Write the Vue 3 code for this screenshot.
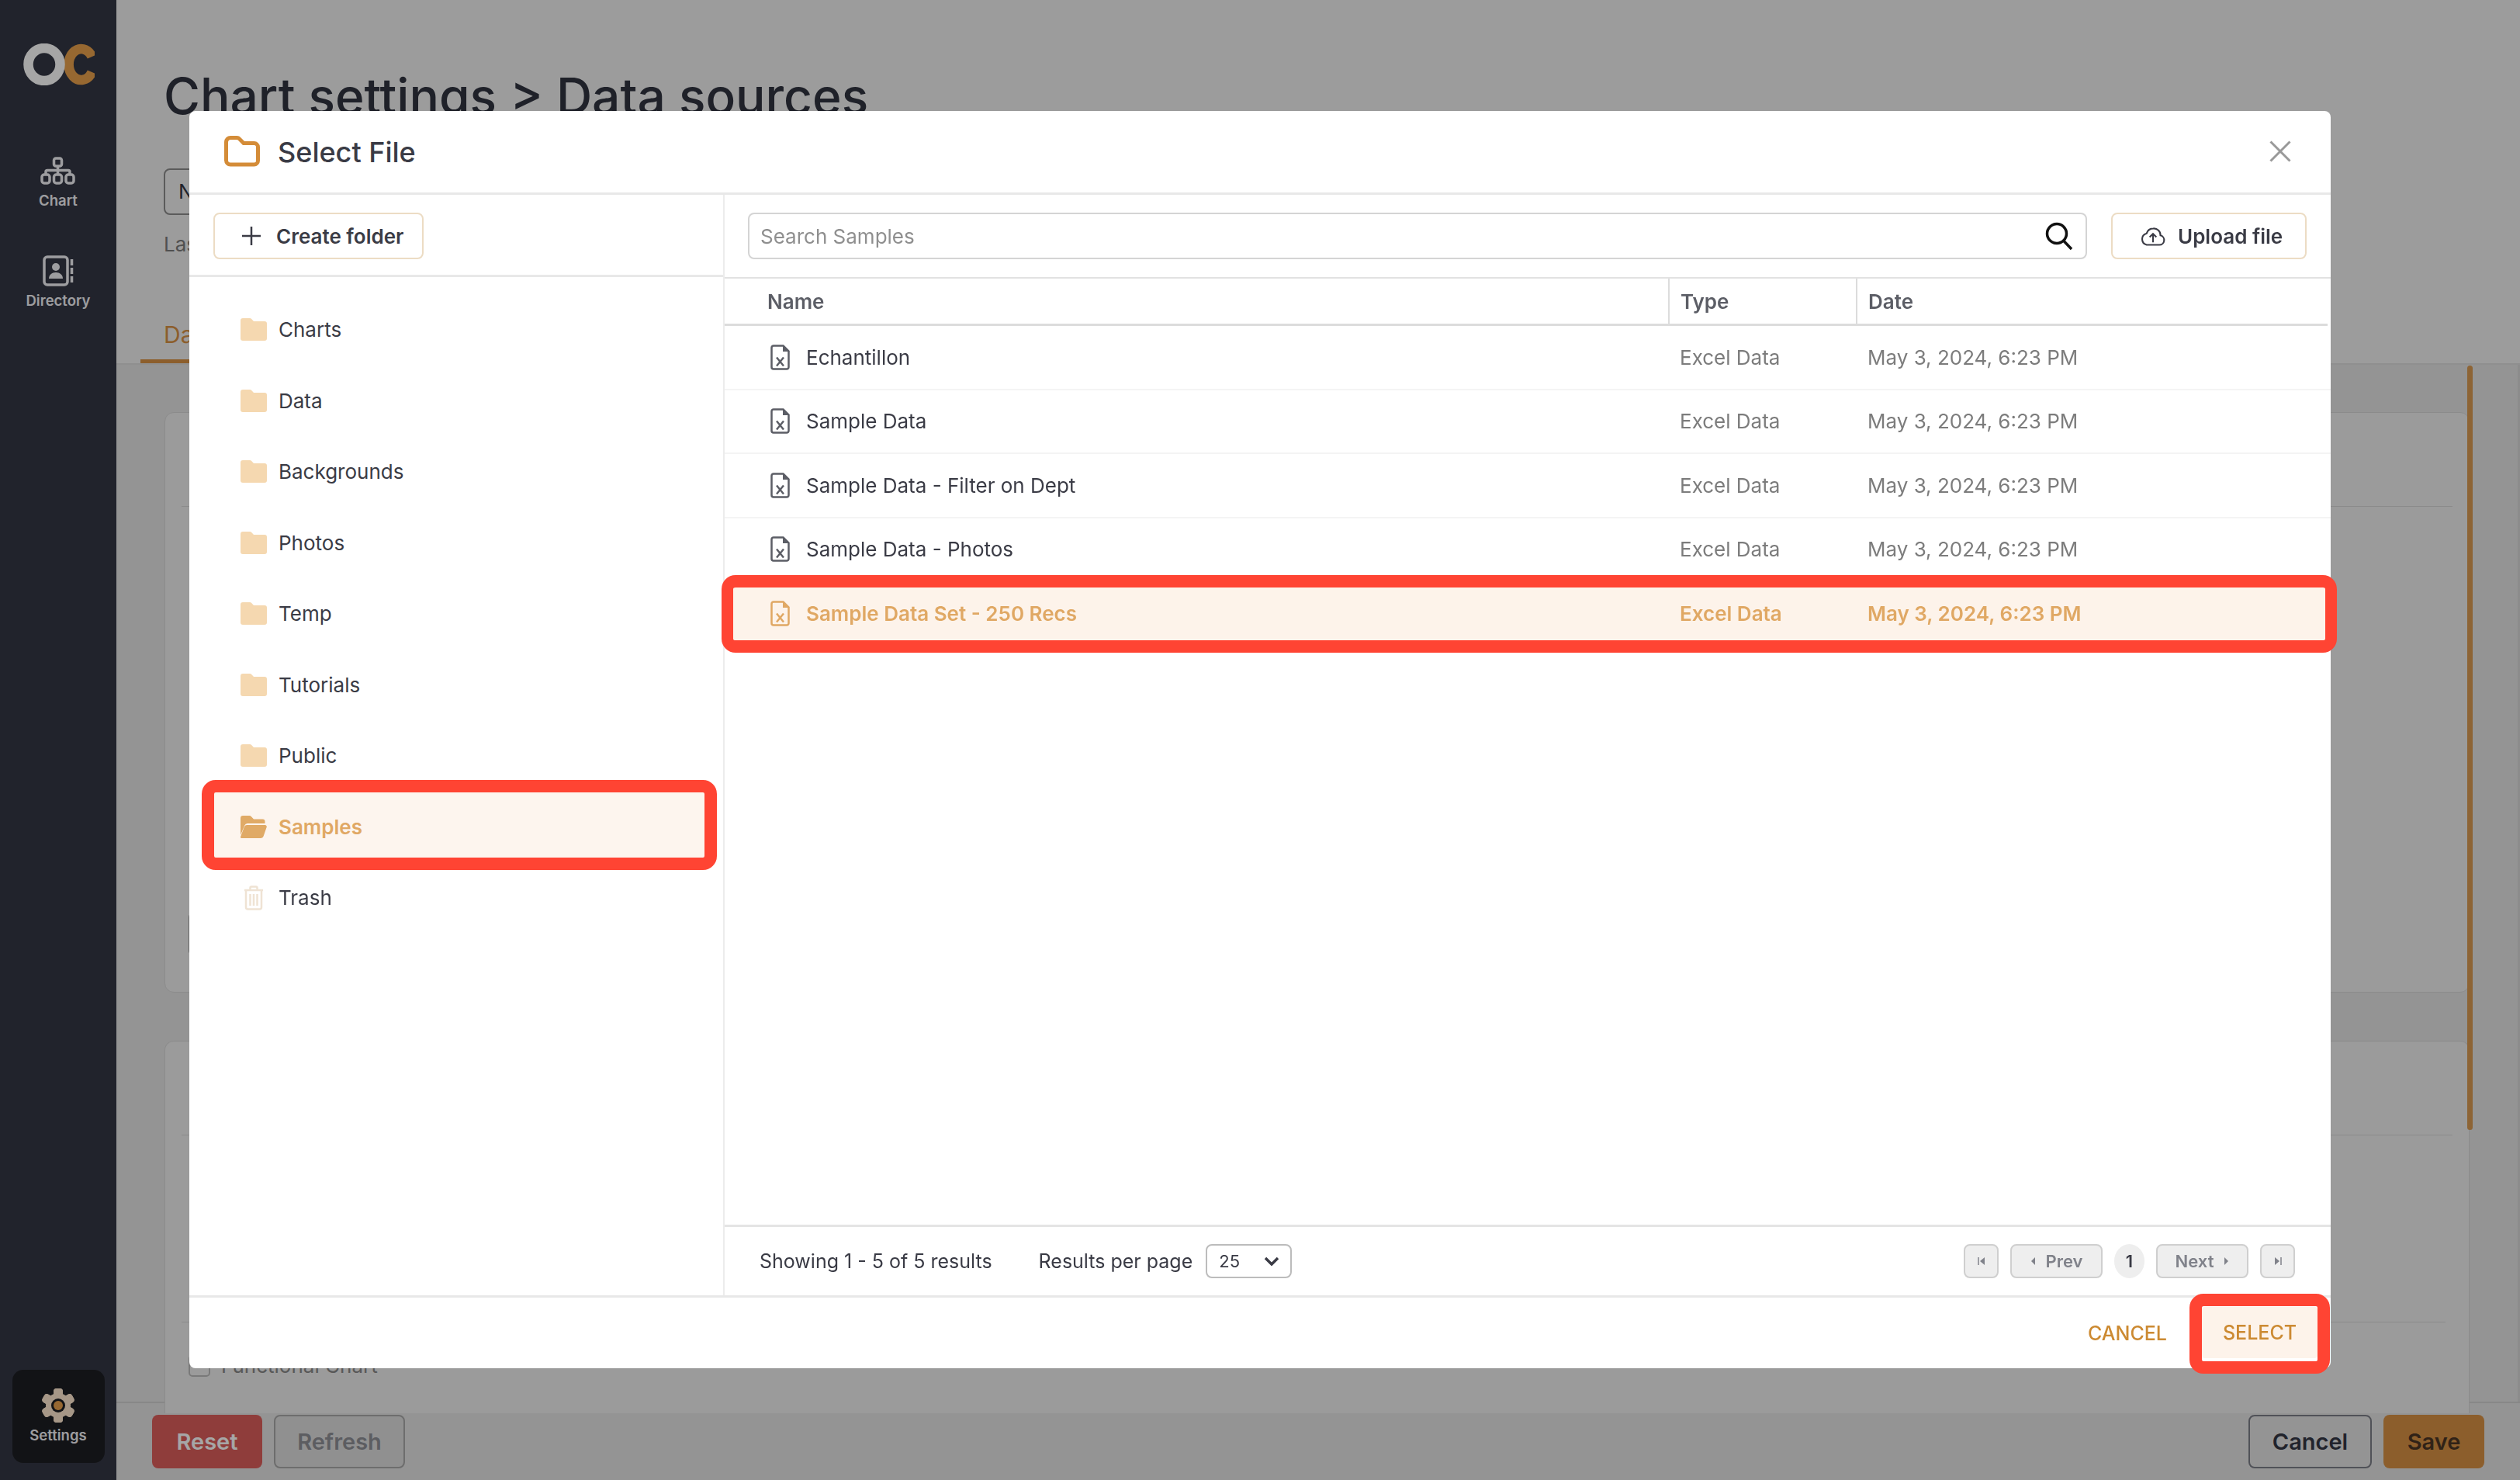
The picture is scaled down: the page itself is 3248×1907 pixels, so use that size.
<script setup>
const folders = [
  { name: 'Charts' }, { name: 'Data' }, { name: 'Backgrounds' }, { name: 'Photos' },
  { name: 'Temp' }, { name: 'Tutorials' }, { name: 'Public' },
  { name: 'Samples', open: true }, { name: 'Trash', trash: true },
]
const files = [
  { name: 'Echantillon' }, { name: 'Sample Data' }, { name: 'Sample Data - Filter on Dept' },
  { name: 'Sample Data - Photos' }, { name: 'Sample Data Set - 250 Recs', active: true },
]
const teeth = [0, 60, 120, 180, 240, 300]
</script>

<template>
  <div class="app">
    <aside class="side">
      <svg class="logo" viewBox="0 0 92 54" width="92" height="54">
        <path class="logo-c" d="M88.5 17 A16 20 0 1 0 88.5 37" />
        <ellipse class="logo-o" cx="27" cy="27" rx="20.5" ry="21" />
      </svg>
      <div class="nav nav-chart">
        <svg viewBox="0 0 45 36" width="45" height="36" class="nav-ic">
          <rect x="17.5" y="2" width="10" height="10" rx="2.5" />
          <path d="M22.5 12v11M7 23v-3.500a2 2 0 0 1 2-2h27a2 2 0 0 1 2 2V23" />
          <rect x="2" y="23" width="10" height="11" rx="3" />
          <rect x="17.500" y="23" width="10" height="11" rx="3" />
          <rect x="33" y="23" width="10" height="11" rx="3" />
        </svg>
        <span>Chart</span>
      </div>
      <div class="nav nav-dir">
        <svg viewBox="0 0 40 40" width="40" height="40" class="nav-ic">
          <rect x="2" y="2" width="30" height="36" rx="4" />
          <circle class="solid" cx="17" cy="15" r="5" />
          <path class="solid" d="M8 30c0-5 4-8 9-8s9 3 9 8z" />
          <path d="M37.500 5v8M37.500 16v8M37.500 27v8" />
        </svg>
        <span>Directory</span>
      </div>
      <div class="nav nav-set">
        <svg viewBox="0 0 44 46" width="44" height="46">
          <g class="gear">
            <rect v-for="a in teeth" :key="a" x="16" y="1" width="12" height="44" rx="4" :transform="`rotate(${a} 22 23)`" />
            <circle cx="22" cy="23" r="16" />
          </g>
          <circle class="gear-ring" cx="22" cy="23" r="9" />
          <circle class="gear-dot" cx="22" cy="23" r="6" />
        </svg>
        <span>Settings</span>
      </div>
    </aside>

    <main class="main">
      <header class="top">
        <h1>Chart settings &gt; Data sources</h1>
        <div class="name-input">Name</div>
        <p class="updated">Last updated</p>
        <div class="tabs"><span class="tab">Data sources</span></div>
      </header>
      <section class="content">
        <div class="card card-a">
          <div class="card-head"></div>
          <div class="ghost-input"></div>
        </div>
        <div class="card card-b">
          <div class="card-head"></div>
          <div class="card-split"></div>
          <label class="check"><i></i>Functional Chart</label>
        </div>
        <div class="thumb"></div>
      </section>
      <footer class="bar">
        <button class="btn reset">Reset</button>
        <button class="btn refresh">Refresh</button>
        <span class="grow"></span>
        <button class="btn cancel">Cancel</button>
        <button class="btn save">Save</button>
      </footer>
    </main>

    <div class="overlay">
      <div class="modal">
        <header class="m-head">
          <svg viewBox="0 0 46 40" width="46" height="40" class="m-folder">
            <path d="M2.500 8a5.500 5.500 0 0 1 5.500-5.500h8.500a4 4 0 0 1 3 1.400L25 9.500h13.500a5 5 0 0 1 5 5V32a5 5 0 0 1-5 5H8a5.500 5.500 0 0 1-5.500-5.500z" />
          </svg>
          <h2>Select File</h2>
          <svg viewBox="0 0 28 28" width="28" height="28" class="m-close">
            <path d="M1.500 1.500l25 25M26.500 1.500l-25 25" />
          </svg>
        </header>

        <div class="m-body">
          <div class="left">
            <div class="left-tools">
              <button class="ghost create">
                <svg viewBox="0 0 24 24" width="24" height="24" class="plus"><path d="M12 0v24M0 12h24" /></svg>
                Create folder
              </button>
            </div>
            <ul class="folders">
              <li v-for="f in folders" :key="f.name" class="folder" :class="{ open: f.open }">
                <svg v-if="f.trash" viewBox="0 0 34 32" width="34" height="32" class="ic-trash">
                  <path d="M5 6h24M12.500 6V3a1.500 1.500 0 0 1 1.500-1.500h6a1.500 1.500 0 0 1 1.500 1.500v3M7 6v22a2.500 2.500 0 0 0 2.500 2.500h15A2.500 2.500 0 0 0 27 28V6M12.500 11v15M17 11v15M21.500 11v15" />
                </svg>
                <svg v-else-if="f.open" viewBox="0 0 34 29" width="34" height="29" class="ic-open">
                  <path d="M0 3a3 3 0 0 1 3-3h8.500a3 3 0 0 1 2.200 1L17 4.500h11.500a3 3 0 0 1 3 3V10H9a4 4 0 0 0-3.700 2.500L0 25z" />
                  <path d="M8 12h23.500a2.200 2.200 0 0 1 2.100 3l-4 11.500a3.500 3.500 0 0 1-3.300 2.500H1.500a1.500 1.500 0 0 1-1.400-2l4.700-12.500A3.500 3.500 0 0 1 8 12z" />
                </svg>
                <svg v-else viewBox="0 0 34 29" width="34" height="29" class="ic-folder">
                  <path d="M0 3a3 3 0 0 1 3-3h9a3 3 0 0 1 2.200 1L17 4h14a3 3 0 0 1 3 3v19a3 3 0 0 1-3 3H3a3 3 0 0 1-3-3z" />
                </svg>
                <span>{{ f.name }}</span>
              </li>
            </ul>
          </div>

          <div class="right">
            <div class="right-tools">
              <div class="search">
                <input class="search-in" placeholder="Search Samples" />
                <svg viewBox="0 0 36 36" width="36" height="36" class="ic-search">
                  <circle cx="15" cy="15" r="12.500" /><path d="M24 24.500l10 10.500" />
                </svg>
              </div>
              <button class="ghost upload">
                <svg viewBox="0 0 34 26" width="33" height="25" class="ic-cloud">
                  <path d="M9 24.500h17a6.500 6.500 0 0 0 1.500-12.800A9 9 0 0 0 18 2.500a9.500 9.500 0 0 0-9 6.500 8 8 0 0 0 0 15.500z" />
                  <path d="M17.500 21V10M13 14l4.500-4.500L22 14" />
                </svg>
                Upload file
              </button>
            </div>

            <div class="t-head">
              <div class="th th-name">Name</div>
              <div class="th">Type</div>
              <div class="th">Date</div>
            </div>
            <div class="t-body">
              <div v-for="r in files" :key="r.name" class="t-row" :class="{ active: r.active }">
                <div class="td td-name">
                  <svg viewBox="0 0 25 33" width="25" height="33" class="ic-file">
                    <path d="M4 1.500h12.500L23.500 8.500V29a2.500 2.500 0 0 1-2.500 2.500H4A2.500 2.500 0 0 1 1.500 29V4A2.500 2.500 0 0 1 4 1.500z" />
                    <path class="fold" d="M16 1.500l7.500 7.500H16z" />
                    <path class="x" d="M8 16.500l9 11M17 16.500l-9 11" />
                  </svg>
                  <span>{{ r.name }}</span>
                </div>
                <div class="td td-muted">Excel Data</div>
                <div class="td td-muted">May 3, 2024, 6:23 PM</div>
              </div>
            </div>

            <div class="pager">
              <span>Showing 1 - 5 of 5 results</span>
              <span class="per">Results per page</span>
              <div class="size">
                <span>25</span>
                <svg viewBox="0 0 20 12" width="20" height="12" class="ic-chev"><path d="M2 2l8 8 8-8" /></svg>
              </div>
              <div class="pages">
                <button class="pg pg-sq">
                  <svg viewBox="0 0 10 12" width="10" height="12"><path class="tri" d="M9 1L3 6l6 5z" /><path class="bar-ic" d="M1 1v10" /></svg>
                </button>
                <button class="pg pg-wide">
                  <svg viewBox="0 0 7 12" width="7" height="12"><path class="tri" d="M6 1L1 6l5 5z" /></svg>
                  Prev
                </button>
                <span class="pg-num">1</span>
                <button class="pg pg-wide">
                  Next
                  <svg viewBox="0 0 7 12" width="7" height="12"><path class="tri" d="M1 1l5 5-5 5z" /></svg>
                </button>
                <button class="pg pg-sq">
                  <svg viewBox="0 0 10 12" width="10" height="12"><path class="tri" d="M1 1l6 5-6 5z" /><path class="bar-ic" d="M9 1v10" /></svg>
                </button>
              </div>
            </div>
          </div>
        </div>

        <footer class="m-foot">
          <button class="act">CANCEL</button>
          <button class="act act-on">SELECT</button>
        </footer>

        <span class="annot annot-folder"></span>
        <span class="annot annot-file"></span>
        <span class="annot annot-select"></span>
      </div>
    </div>
  </div>
</template>

<style>
html, body { margin: 0; padding: 0; }
</style>

<style scoped>
* { box-sizing: border-box; }
.app {
  display: flex; width: 100%; height: 100vh; overflow: hidden;
  font-family: Inter, "Liberation Sans", sans-serif; background: #ebebeb; color: #343744;
}
button { font-family: inherit; cursor: pointer; }

/* sidebar */
.side { position: relative; width: 150px; flex: none; background: #343744; display: flex; flex-direction: column; align-items: center; }
.logo { margin-top: 56px; margin-left: 2px; }
.logo-o { fill: none; stroke: #fff; stroke-width: 12.500; }
.logo-c { fill: none; stroke: #e8a04c; stroke-width: 12.500; }
.nav { display: flex; flex-direction: column; align-items: center; color: #f2f2f6; font-size: 18.500px; font-weight: 600; }
.nav-chart { margin-top: 92px; gap: 9px; }
.nav-dir { margin-top: 60px; gap: 7px; }
.nav-ic { fill: none; stroke: #f2f2f6; stroke-width: 3.500; }
.nav-ic .solid { fill: #f2f2f6; stroke: none; }
.nav-set { margin-top: auto; margin-bottom: 22px; width: 119px; height: 120px; background: #1d1e23; border-radius: 14px; justify-content: flex-start; padding-top: 23px; gap: 4px; }
.gear { fill: #ffe9cf; }
.gear-ring { fill: #1d1e23; }
.gear-dot { fill: #e8a04c; }

/* page behind the dialog */
.main { flex: 1; min-width: 0; display: flex; flex-direction: column; }
.top { position: relative; height: 470px; padding: 85px 0 0 61px; background: #f0f0f0; border-bottom: 2px solid #dcdcdc; }
h1 { margin: 0; font-size: 64px; font-weight: 500; line-height: 78px; color: #30333f; white-space: nowrap; }
.name-input { margin-top: 54px; width: 500px; height: 60px; padding: 0 17px; border: 2px solid #8c8c8c; border-radius: 8px; font-size: 26px; line-height: 56px; }
.updated { margin: 20px 0 0; font-size: 26px; line-height: 36px; color: #7c7c7c; }
.tabs { position: absolute; left: 31px; bottom: 0; }
.tab { display: block; height: 62px; padding: 0 30px; font-size: 30px; line-height: 50px; color: #d79144; border-bottom: 5px solid #d79144; }

.content { position: relative; flex: 1; min-height: 0; padding: 61px 62px 0; background: #e4e4e4; border-right: 3px solid #d8d8d8; }
.card { background: #eeeeee; border: 1.500px solid #d6d6d6; border-radius: 12px; }
.card-a { height: 748px; }
.card-b { height: 480px; margin-top: 62px; border-bottom: 0; border-radius: 12px 12px 0 0; }
.card-head { margin: 0 21px; height: 121px; border-bottom: 1.500px solid #d4d4d4; }
.ghost-input { margin: 523px 0 0 30px; height: 55px; width: 400px; border: 2px solid #999; border-radius: 6px; }
.card-split { margin: 240px 30px 0 21px; border-bottom: 1.500px solid #d4d4d4; }
.check { display: flex; align-items: center; margin: 40px 0 0 30px; gap: 14px; font-size: 26px; color: #888; }
.check i { width: 28px; height: 28px; border: 2px solid #bbb; border-radius: 5px; }
.thumb { position: absolute; right: 58px; top: 1px; width: 7px; height: 985px; background: #d99a52; border-radius: 4px; }

.bar { height: 101px; flex: none; display: flex; align-items: center; gap: 15px; padding: 0 46px; background: #e4e4e4; border-top: 2px solid #cfcfcf; }
.grow { flex: 1; }
.btn { height: 69px; border-radius: 8px; font-size: 29px; font-weight: 600; border: 2px solid transparent; }
.reset { width: 142px; background: #dc5f5b; color: #fff; }
.refresh { width: 169px; background: #dedede; color: #8e8f95; border-color: #a8a8a8; }
.cancel { width: 159px; background: transparent; color: #343744; border-color: #7c7e88; }
.save { width: 130px; background: #d79144; color: #4a3524; }

/* dialog */
.overlay { position: fixed; inset: 0; padding: 143px 244px 144px; background: rgba(0, 0, 0, 0.35); }
.modal { position: relative; height: 100%; display: flex; flex-direction: column; background: #fff; border-radius: 8px; color: #3a3b45; }
.m-head { height: 108px; flex: none; display: flex; align-items: center; padding: 0 51px 0 45px; border-bottom: 3px solid #e8e8e8; }
.m-folder { fill: none; stroke: #d48c38; stroke-width: 5; margin-bottom: 2px; }
h2 { margin: 0 0 0 23px; font-size: 36px; font-weight: 500; color: #3a3b45; }
.m-close { margin-left: auto; fill: none; stroke: #999; stroke-width: 3; margin-bottom: 1px; }

.m-body { flex: 1; min-height: 0; display: flex; }
.left { width: 690px; flex: none; border-right: 2px solid #ececec; }
.left-tools { height: 106px; padding-top: 23px; padding-left: 31px; border-bottom: 3px solid #e8e8e8; }
.ghost { display: flex; align-items: center; height: 60px; background: #fff; border: 2px solid #ecdcc4; border-radius: 8px; font-size: 26px; font-weight: 600; color: #3a3b45; white-space: nowrap; }
.create { width: 271px; padding: 0 0 0 35px; gap: 20px; }
.plus { fill: none; stroke: #3a3b45; stroke-width: 2.500; }
.folders { list-style: none; margin: 0; padding: 22px 0 0; }
.folder { display: flex; align-items: center; height: 91.500px; margin: 0 20px; padding-left: 46px; gap: 15px; font-size: 26px; }
.ic-folder { fill: #f5d8b0; flex: none; }
.ic-open { fill: #e0aa66; flex: none; }
.ic-trash { fill: none; stroke: #efe3d4; stroke-width: 2.500; flex: none; }
.folder.open { background: #fdf5ee; color: #e0a864; font-weight: 600; }

.right { flex: 1; min-width: 0; display: flex; flex-direction: column; }
.right-tools { height: 108px; flex: none; display: flex; gap: 31px; padding: 23px 31px 0 30px; border-bottom: 2px solid #e2e2e2; }
.search { flex: 1; height: 60px; display: flex; align-items: center; padding: 0 16px 0 14px; border: 2px solid #d4d4d4; border-radius: 8px; }
.search-in { flex: 1; min-width: 0; border: 0; outline: 0; padding: 0; font: 400 26px Inter, sans-serif; color: #3a3b45; }
.search-in::placeholder { color: #8f8f8f; opacity: 1; }
.ic-search { fill: none; stroke: #111; stroke-width: 3.500; }
.upload { width: 252px; padding-left: 35px; gap: 16px; }
.ic-cloud { fill: none; stroke: #3a3b45; stroke-width: 2.200; }

.t-head, .t-row { display: grid; grid-template-columns: 1216px 242px 1fr; align-items: center; }
.t-head { height: 61px; flex: none; border-bottom: 3px solid #dcdcdc; margin-right: 4px; }
.th { height: 100%; display: flex; align-items: center; padding-left: 14px; font-size: 26px; font-weight: 600; color: #5c5e66; border-left: 2px solid #dcdcdc; }
.th-name { padding-left: 55px; border-left: 0; }
.t-body { flex: 1; min-height: 0; }
.t-row { height: 82.500px; border-bottom: 2px solid #f4f4f4; font-size: 26px; }
.td { padding-left: 15px; white-space: nowrap; }
.td-name { display: flex; align-items: center; gap: 21px; padding-left: 59px; }
.td-muted { color: #7c7c7c; }
.ic-file { flex: none; fill: none; stroke: #5c5e66; stroke-width: 2.500; }
.ic-file .fold { fill: #5c5e66; stroke: none; }
.t-row.active { background: #fdf3ea; border-bottom-color: transparent; font-weight: 600; }
.t-row.active .td, .t-row.active .td-muted { color: #e0a864; }
.t-row.active .ic-file { stroke: #e0a864; stroke-width: 2.500; }
.t-row.active .ic-file .fold { fill: #e0a864; }

.pager { height: 91px; flex: none; display: flex; align-items: center; padding: 0 46px 0 45px; border-top: 3px solid #e4e4e4; font-size: 25px; white-space: nowrap; }
.per { margin-left: 60px; }
.size { display: flex; align-items: center; justify-content: space-between; width: 111px; height: 44px; margin-left: 17px; padding: 0 14px 0 15px; border: 2px solid #bcbcbc; border-radius: 8px; font-size: 22px; }
.ic-chev { fill: none; stroke: #3a3b45; stroke-width: 3.500; }
.pages { margin-left: auto; display: flex; align-items: center; gap: 15px; }
.pg { display: flex; align-items: center; justify-content: center; height: 44px; background: #eeeeee; border: 2px solid #cfcfcf; border-radius: 8px; color: #80828a; font-size: 22px; font-weight: 600; padding: 0; }
.pg-sq { width: 45px; }
.pg-wide { width: 119px; gap: 13px; }
.tri { fill: #80828a; }
.bar-ic { fill: none; stroke: #80828a; stroke-width: 1.500; }
.pg-num { width: 39px; height: 44px; display: flex; align-items: center; justify-content: center; background: #eeeeee; border-radius: 50%; font-size: 22px; font-weight: 600; color: #3a3b45; }

.m-foot { height: 94px; flex: none; display: flex; align-items: center; justify-content: flex-end; gap: 17px; padding-right: 17px; border-top: 3px solid #e8e8e8; }
.act { height: 66px; width: 158px; background: transparent; border: 0; border-radius: 4px; font-size: 25px; font-weight: 500; color: #cc8a32; padding: 0; }
.act-on { width: 149px; background: #fdf3ea; margin-top: -1px; }

/* red call-outs drawn on top of the dialog */
.annot { position: absolute; border: 16px solid #ff4433; border-radius: 18px; pointer-events: none; }
.annot-folder { left: 16px; top: 862px; width: 664px; height: 116px; }
.annot-file { left: 686px; top: 598px; width: 2082px; height: 100px; border-width: 16px 15px; }
.annot-select { left: 2578px; top: 1524px; width: 181px; height: 103px; }
</style>
